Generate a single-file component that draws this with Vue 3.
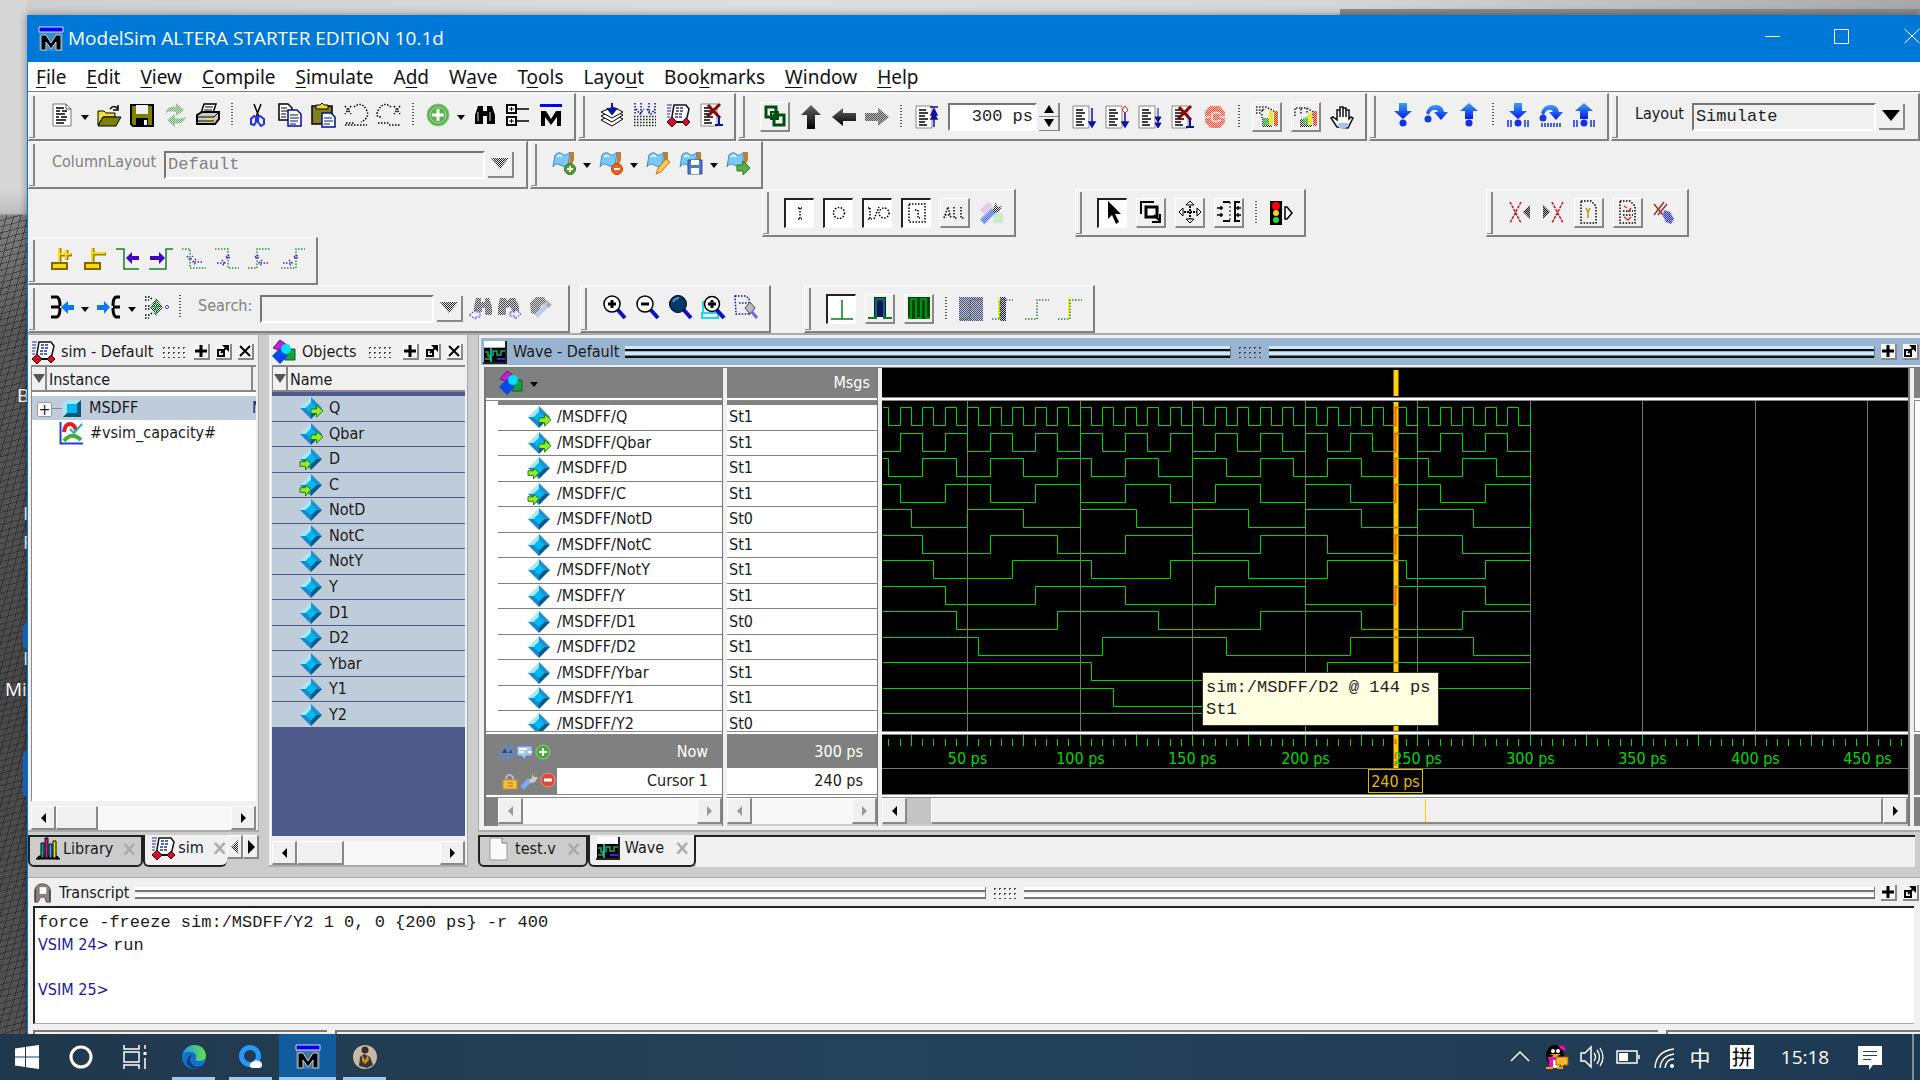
<template>
  <div class="desktop">
    <svg class="defs" width="0" height="0" aria-hidden="true">
      <defs>
        <pattern id="dk" width="2" height="2" patternUnits="userSpaceOnUse"><path d="M0 0h1v1H0zM1 1h1v1H1z" fill="#222" /></pattern>
        <pattern id="db" width="2" height="2" patternUnits="userSpaceOnUse"><path d="M0 0h1v1H0zM1 1h1v1H1z" fill="#2a2ae0" /></pattern>
        <pattern id="dg" width="2" height="2" patternUnits="userSpaceOnUse"><path d="M0 0h1v1H0zM1 1h1v1H1z" fill="#4a9a4a" /></pattern>
        <pattern id="dr" width="2" height="2" patternUnits="userSpaceOnUse"><path d="M0 0h1v1H0zM1 1h1v1H1z" fill="#f03010" /></pattern>
        <linearGradient id="gb" x1="0" y1="0" x2="0" y2="1"><stop offset="0" stop-color="#38a0f8" /><stop offset="1" stop-color="#0818e8" /></linearGradient>
        <linearGradient id="gk" x1="0" y1="0" x2="0" y2="1"><stop offset="0" stop-color="#666" /><stop offset="1" stop-color="#000" /></linearGradient>
        <linearGradient id="ge" x1="0" y1="0" x2="1" y2="0"><stop offset="0" stop-color="#1c9de0" /><stop offset="1" stop-color="#6be04a" /></linearGradient>
      </defs>
    </svg>

    <div class="wallpaper">
      <span class="shortcut s1">B</span>
      <span class="shortcut s2">I</span>
      <span class="shortcut s3">F</span>
      <span class="shortcut s4">I</span>
      <span class="shortcut s5">Mi</span>
      <i class="blob b1"></i>
      <i class="blob b2"></i>
    </div>

    <main class="window">
      <header class="titlebar">
        <svg class="ico" viewBox="0 0 24 24" v-html="icons.logo"></svg>
        <h1>ModelSim ALTERA STARTER EDITION 10.1d</h1>
        <button class="win-btn" aria-label="Minimize"><svg viewBox="0 0 16 16"><path d="M0 8.500h15" /></svg></button>
        <button class="win-btn" aria-label="Maximize"><svg viewBox="0 0 16 16"><path d="M.5 1.500h14v14H.5z" /></svg></button>
        <button class="win-btn last" aria-label="Close"><svg viewBox="0 0 16 16"><path d="M.5 1l15 14M15.500 1l-15 14" /></svg></button>
      </header>

      <nav class="menu">
        <button v-for="m in menus" :key="m[1] + m[2]">{{ m[0] }}<u>{{ m[1] }}</u>{{ m[2] }}</button>
      </nav>

      <section class="toolbars">
        <div v-for="(row, r) in toolbarRows" :key="r" class="tb-row">
          <div v-for="(bar, n) in row" :key="n" class="tb" :class="bar.cls">
            <span class="handle"></span>
            <template v-for="(it, k) in bar.items" :key="k">
              <span v-if="it === '|'" class="tb-sep"></span>
              <span v-else-if="it === 'v'" class="caret"></span>
              <div v-else-if="it === 'runlength'" class="spin">
                <input type="text" value="300 ps" aria-label="Run length" />
                <div class="spin-btns">
                  <button aria-label="Increase"><i class="up"></i></button>
                  <button aria-label="Decrease"><i class="down"></i></button>
                </div>
              </div>
              <div v-else-if="combos[it]" class="combo" :class="it">
                <label :for="it">{{ combos[it].label }}</label>
                <select :id="it" :disabled="combos[it].off"><option>{{ combos[it].value }}</option></select>
                <span class="combo-arrow">
                  <svg viewBox="0 0 20 14"><path d="M1 1h18l-9 11z" :fill="combos[it].off ? 'url(#dk)' : '#000'" /></svg>
                </span>
              </div>
              <button v-else class="tool" :class="looks[it]" :aria-label="it">
                <svg class="ico" viewBox="0 0 24 24" v-html="icons[it]"></svg>
              </button>
            </template>
          </div>
        </div>
      </section>

      <section class="docks">
        <div class="col sim-col">
          <div class="pane">
            <div class="pane-title">
              <svg class="ico" viewBox="0 0 24 24" v-html="icons.sim"></svg>
              <span>sim - Default</span>
              <span class="grip"></span>
              <button v-for="b in paneBtns" :key="b" class="mini" :aria-label="b"><svg viewBox="0 0 14 14" v-html="icons[b]"></svg></button>
            </div>
            <div class="list-head"><span class="sort"><i></i></span><span class="head-text">Instance</span><span class="head-end"></span></div>
            <div class="tree">
              <div class="tree-row selected">
                <span class="expander">+</span><span class="branch"></span>
                <svg class="cube" viewBox="0 0 20 20"><path d="M1 6l4-4h14L5 17H1z" fill="#a8e4f8" /><path d="M19 2v17H1l4-4z" fill="#04587c" /><path d="M5 6h10v9H5z" fill="#00b8f0" /></svg>
                <span class="tree-name">MSDFF</span><span class="tree-unit">M</span>
              </div>
              <div class="tree-row cap">
                <svg class="ico" viewBox="0 0 24 24"><path d="M1.500 1v21.500H24" fill="none" stroke="#2040e0" stroke-width="2" /><path d="M5 11q1-8 6-8 4 0 6 6" fill="none" stroke="#e02020" stroke-width="4" /><path d="M11 8l4 4 8-9" fill="none" stroke="#20b0c0" stroke-width="2" /><path d="M5 20q8-10 17-1" fill="none" stroke="#40b030" stroke-width="4" /></svg>
                <span>#vsim_capacity#</span>
              </div>
            </div>
            <div class="hscroll"><button aria-label="Left"><i class="left"></i></button><span class="thumb t1"></span><span class="trough"></span><button aria-label="Right"><i class="right"></i></button></div>
          </div>
          <div class="tabs">
            <button class="tab off"><svg class="ico" viewBox="0 0 24 24" v-html="icons.library"></svg>Library<b>×</b></button>
            <button class="tab cut"><svg class="ico" viewBox="0 0 24 24" v-html="icons.sim"></svg>sim<b>×</b></button>
            <button class="tab-nav" aria-label="Previous tab"><svg viewBox="0 0 8 14"><path d="M7 0v14L0 7z" fill="url(#dk)" /></svg></button>
            <button class="tab-nav" aria-label="Next tab"><svg viewBox="0 0 8 14"><path d="M1 0v14l7-7z" /></svg></button>
          </div>
        </div>

        <div class="pane objects">
          <div class="pane-title">
            <svg class="ico" viewBox="0 0 24 24" v-html="icons.shapes"></svg>
            <span>Objects</span>
            <span class="grip"></span>
            <button v-for="b in paneBtns" :key="b" class="mini" :aria-label="b"><svg viewBox="0 0 14 14" v-html="icons[b]"></svg></button>
          </div>
          <div class="list-head"><span class="sort"><i></i></span><span class="head-text">Name</span></div>
          <div class="obj-body">
            <ul class="obj-list">
              <li v-for="s in signals" :key="s.name"><svg class="ico" viewBox="0 0 24 24" v-html="icons[s.kind]"></svg>{{ s.name }}</li>
            </ul>
          </div>
          <div class="hscroll"><button aria-label="Left"><i class="left"></i></button><span class="thumb t2"></span><span class="trough"></span><button aria-label="Right"><i class="right"></i></button></div>
        </div>

        <div class="col wave-col">
          <div class="pane wave">
            <div class="pane-title blue">
              <svg class="ico" viewBox="0 0 24 24" v-html="icons.wave"></svg>
              <span>Wave - Default</span>
              <span class="rail"></span><span class="grip"></span><span class="rail"></span>
              <button v-for="b in paneBtns.slice(0, 2)" :key="b" class="mini" :aria-label="b"><svg viewBox="0 0 14 14" v-html="icons[b]"></svg></button>
            </div>
            <div class="wave-grid">
              <div class="wcol names">
                <div class="w-head"><svg class="ico" viewBox="0 0 24 24" v-html="icons.shapes"></svg><span class="caret"></span></div>
                <div class="sash"></div>
                <div class="w-body">
                  <ul><li v-for="s in signals" :key="s.name"><svg class="ico" viewBox="0 0 24 24" v-html="icons[s.kind]"></svg>/MSDFF/{{ s.name }}</li></ul>
                </div>
                <div class="sash"></div>
                <div class="w-now">
                  <svg viewBox="0 0 52 18"><path d="M1 11L6 3l3 6 3-5 3 7zM2 15h12" fill="#444" stroke="#5a8ad0" stroke-width="2" /><path d="M18 3h15v10h-6l-2 4-2-4h-5z" fill="#a8c4f0" stroke="#6080c0" /><path d="M20 6h8M20 9h5M29 9h4" stroke="#fff" stroke-width="2" /><circle cx="44" cy="9" r="7" fill="#50a840" stroke="#8ad080" /><path d="M44 5v8M40 9h8" stroke="#fff" stroke-width="2" /></svg>
                  <span>Now</span>
                </div>
                <div class="w-cursor">
                  <div class="c-icons"><svg viewBox="0 0 54 18"><path d="M4 9V6q3-6 7-1v3" fill="none" stroke="#b8b8b8" stroke-width="2" /><path d="M1 8h14v9H1z" fill="#f0c040" stroke="#c89020" /><path d="M6 11h5M6 14h5" stroke="#b07810" /><path d="M20 16l8-8" stroke="#80a8f0" stroke-width="5" /><path d="M27 8l3-2V2l2 3h4l-3 5-5 1z" fill="#ccc" /><circle cx="46" cy="8" r="7" fill="#e04838" stroke="#f09080" /><path d="M42 8h8" stroke="#fff" stroke-width="3" /></svg></div>
                  <span>Cursor 1</span>
                </div>
                <div class="sash"></div>
                <div class="hscroll faded"><button aria-label="Left"><i class="left"></i></button><span class="trough"></span><button aria-label="Right"><i class="right"></i></button></div>
              </div>
              <div class="wcol values">
                <div class="w-head msgs">Msgs</div>
                <div class="sash"></div>
                <div class="w-body"><ul><li v-for="s in signals" :key="s.name">{{ s.value }}</li></ul></div>
                <div class="sash"></div>
                <div class="w-now"><span>300 ps</span></div>
                <div class="w-cursor"><span>240 ps</span></div>
                <div class="sash"></div>
                <div class="hscroll faded"><button aria-label="Left"><i class="left"></i></button><span class="trough"></span><button aria-label="Right"><i class="right"></i></button></div>
              </div>
              <div class="wcol plot">
                <svg class="w-head"><rect :x="px(240) - 2" y="2" width="5" height="26" fill="#ffd000" /></svg>
                <div class="sash"></div>
                <div class="w-body">
                  <svg class="canvas">
                    <clipPath id="cur"><rect :x="px(240) - 2" y="0" width="5" height="700" /></clipPath>
                    <path v-for="t in gridTimes" :key="t" :d="`M${px(t)} 0V900`" stroke="#747474" stroke-width="1" />
                    <path v-for="(d, i) in traces" :key="i" :d="d" class="trace" />
                    <rect :x="px(240) - 2" y="1" width="5" height="900" fill="#ffd000" />
                    <g clip-path="url(#cur)"><path v-for="(d, i) in traces" :key="i" :d="d" class="trace hot" /></g>
                  </svg>
                </div>
                <div class="sash"></div>
                <svg class="w-now">
                  <path :d="ticks" stroke="#00d800" />
                  <rect :x="px(240) - 2" y="0" width="5" height="33" fill="#ffd000" />
                  <path :d="`M${px(240)} 4v7M${px(240)} 19v14`" stroke="#ff5a00" stroke-width="2" stroke-dasharray="5 2" />
                  <text v-for="t in gridTimes" :key="t" :x="px(t)" y="29">{{ t }} ps</text>
                </svg>
                <svg class="w-cursor">
                  <path d="M0 .5h3000" stroke="#777" />
                  <rect :x="px(240) - 27" y="1.500" width="54" height="23" fill="#000" stroke="#e8b800" stroke-width="1" />
                  <text :x="px(240)" y="19">240 ps</text>
                </svg>
                <div class="sash"></div>
                <div class="hscroll long"><button aria-label="Left"><i class="left"></i></button><span class="before"></span><span class="thumb"><i class="mark"></i></span><button aria-label="Right"><i class="right"></i></button></div>
                <div class="tooltip">sim:/MSDFF/D2 @ 144 ps<br />St1</div>
              </div>
              <div class="wcol edge">
                <div class="w-head"></div><div class="sash"></div><div class="w-body"></div><div class="sash"></div><div class="w-now"></div><div class="w-cursor"></div><div class="sash"></div><div class="end"></div>
              </div>
            </div>
          </div>
          <div class="tabs">
            <button class="tab off"><svg class="ico" viewBox="0 0 24 24"><path d="M4 1h12l5 5v17H4z" fill="#fafafa" stroke="#999" /><path d="M16 1v5h5" fill="#ddd" stroke="#777" /></svg>test.v<b>×</b></button>
            <button class="tab"><svg class="ico" viewBox="0 0 24 24" v-html="icons.wave"></svg>Wave<b>×</b></button>
            <span class="tab-rest"></span>
          </div>
        </div>
      </section>

      <section class="transcript">
        <div class="pane-title">
          <svg class="ico" viewBox="0 0 24 24"><path d="M2 23V8q2-7 9-7 8 0 10 7v15h-5l-2-6H9l-3 6z" fill="#8a8080" stroke="#555" /><path d="M8 5h8v8H8z" fill="#fff" /><path d="M3 8v14M20 8v14" stroke="#333" /></svg>
          <span>Transcript</span>
          <span class="rail"></span><span class="grip"></span><span class="rail"></span>
          <button v-for="b in paneBtns.slice(0, 2)" :key="b" class="mini" :aria-label="b"><svg viewBox="0 0 14 14" v-html="icons[b]"></svg></button>
        </div>
        <div class="console">
          <p>force -freeze sim:/MSDFF/Y2 1 0, 0 {200 ps} -r 400</p>
          <p><em>VSIM 24&gt;&nbsp;</em>run</p>
          <p></p>
          <p><em>VSIM 25&gt;</em></p>
        </div>
        <div class="status"><span class="st1"></span><span class="st2"></span><span class="st3"></span></div>
      </section>
    </main>

    <footer class="taskbar">
      <button v-for="a in apps" :key="a.icon" class="app" :class="a.cls" :aria-label="a.icon"><svg class="ico" viewBox="0 0 24 24" v-html="icons[a.icon]"></svg></button>
      <span class="spacer"></span>
      <button v-for="t in tray" :key="t" class="tray" :aria-label="t"><svg class="ico" viewBox="0 0 24 24" v-html="icons[t]"></svg></button>
      <span class="ime">中</span>
      <span class="ime boxed"><i>拼</i></span>
      <time>15:18</time>
      <button class="notify" aria-label="Notifications"><svg class="ico" viewBox="0 0 24 24"><path d="M0 0h24v19h-9l-4 5v-5H0z" fill="#fff" /><path d="M5 5.500h14M5 9.500h14M5 13.500h8" stroke="#23405a" stroke-width="1" /></svg></button>
      <span class="peek"></span>
    </footer>
  </div>
</template>

<script setup>
const menus = [
  ['', 'F', 'ile'], ['', 'E', 'dit'], ['', 'V', 'iew'], ['', 'C', 'ompile'], ['', 'S', 'imulate'], ['A', 'd', 'd'],
  ['W', 'a', 've'], ['T', 'o', 'ols'], ['Layo', 'u', 't'], ['Boo', 'k', 'marks'], ['', 'W', 'indow'], ['', 'H', 'elp']
]

// '|' is a separator, 'v' a drop-down caret
const toolbarRows = [
  [
    { cls: 'up', items: ['doc', 'v', 'open', 'save', 'refresh', 'print', '|', 'cut', 'copy', 'paste', 'undo', 'redo', '|', 'add', 'v', 'find', 'treeview', 'msim'] },
    { cls: 'up', items: ['compile', 'compileAll', 'sim', 'stopSim'] },
    { cls: '', items: ['link', 'arrowUp', 'arrowLeft', 'arrowRight', '|', 'restart', 'runlength', 'run', 'runCont', 'runAll', 'brk', 'stop', '|', 'prof1', 'prof2', 'hand'] },
    { cls: 'up', items: ['stepIn', 'stepOver', 'stepOut', '|', 'stepIn2', 'stepOver2', 'stepOut2'] },
    { cls: 'up grow', items: ['layout'] }
  ],
  [
    { cls: 'up col-layout', items: ['column'] },
    { cls: 'up', items: ['flagAdd', 'v', 'flagDel', 'v', 'flagEdit', 'flagSave', 'v', 'flagGo'] }
  ],
  [
    { cls: 'filter', items: ['fI', 'fO', 'fIO', 'fT', 'fAll', 'fWrench'] },
    { cls: 'mode', items: ['pointer', 'zoomMode', 'pan', 'edit', '|', 'traffic'] },
    { cls: 'cover', items: ['xLeft', 'xRight', 'page1', 'page2', 'xErase'] }
  ],
  [
    { cls: 'up', items: ['curAdd', 'curDel', 'edgeL', 'edgeR', 'fall1', 'fall2', 'rise1', 'rise2'] }
  ],
  [
    { cls: 'up search-bar', items: ['mergeL', 'v', 'mergeR', 'v', 'net', '|', 'search', 'findPrev', 'findNext', 'wrench'] },
    { cls: 'up zoom', items: ['zoomIn', 'zoomOut', 'zoomFull', 'zoomCur', 'zoomSel'] },
    { cls: 'show', items: ['w1', 'w2', 'w3', '|', 'w4', 'w5', 'w6', 'w7'] }
  ]
]

const combos = {
  layout: { label: 'Layout', value: 'Simulate', off: false },
  column: { label: 'ColumnLayout', value: 'Default', off: true },
  search: { label: 'Search:', value: '', off: true }
}

const looks = {
  link: 'raised', prof1: 'raised', prof2: 'raised', fI: 'sunken', fO: 'sunken', fIO: 'sunken', fT: 'sunken', fAll: 'raised',
  pointer: 'sunken', zoomMode: 'raised', pan: 'raised', edit: 'raised', page1: 'raised', page2: 'raised',
  w1: 'sunken', w2: 'raised', w3: 'raised', findPrev: 'tight', findNext: 'tight'
}

const paneBtns = ['plus', 'undock', 'close']

// each signal is high for the first half of its period
const signals = [
  { name: 'Q', kind: 'sigOut', value: 'St1', period: 10 },
  { name: 'Qbar', kind: 'sigOut', value: 'St1', period: 20 },
  { name: 'D', kind: 'sigIn', value: 'St1', period: 30 },
  { name: 'C', kind: 'sigIn', value: 'St1', period: 40 },
  { name: 'NotD', kind: 'sig', value: 'St0', period: 50 },
  { name: 'NotC', kind: 'sig', value: 'St1', period: 60 },
  { name: 'NotY', kind: 'sig', value: 'St1', period: 70 },
  { name: 'Y', kind: 'sig', value: 'St1', period: 80 },
  { name: 'D1', kind: 'sig', value: 'St0', period: 90 },
  { name: 'D2', kind: 'sig', value: 'St1', period: 110 },
  { name: 'Ybar', kind: 'sig', value: 'St1', period: 210 },
  { name: 'Y1', kind: 'sig', value: 'St1', period: 230 },
  { name: 'Y2', kind: 'sig', value: 'St0', period: 400 }
]

const start = 13
const end = 300
const px = t => Math.round(t * 2.25 - 27.5) + 0.5

const traces = signals.map((s, i) => {
  const hi = Math.round(6 + i * 25.5) + 0.5
  const lo = hi + 18
  const half = s.period / 2
  const level = t => (Math.floor(t / half) % 2 === 0 ? hi : lo)
  let d = `M1 ${level(start)}`
  for (let t = half; t <= end; t += half) {
    if (t > start) d += `H${px(t)}V${level(t)}`
  }
  return d + `H${px(end)}`
})

const gridTimes = [50, 100, 150, 200, 250, 300, 350, 400, 450]

let ticks = ''
for (let t = 15; t < 1200; t += 5) {
  ticks += t % 25 === 0 ? `M${px(t)} 0v11` : `M${px(t)} 4v7`
}

const apps = [
  { icon: 'windows', cls: '' }, { icon: 'cortana', cls: '' }, { icon: 'taskview', cls: '' },
  { icon: 'edge', cls: 'open first' }, { icon: 'qbrowser', cls: 'open' }, { icon: 'logo', cls: 'open active' }, { icon: 'photo', cls: 'open' }
]
const tray = ['chevron', 'penguin', 'speaker', 'battery', 'wifi']

const page = '<path d="M2 1h16v22H2z" fill="#fff" stroke="#888"/><path d="M5 5h7M5 8h9M5 11h6M5 14h9M5 17h6M5 20h8" stroke="#000" stroke-width="1.500"/>'
const flag = '<path d="M18 1h4v8l-2 4-3 4z" fill="#c08030"/><path d="M3 4q4-4 7-1t8-2l-2 13q-4 3-8 0t-7 2z" fill="#7cc8f4" stroke="#3a8cd0"/><path d="M5 6q3-3 5 0" stroke="#d8f0ff" stroke-width="2" fill="none"/>'
const glass = '<path d="M15 14l8 9" stroke="#1010c0" stroke-width="4"/>'
const dot = 'fill="none" stroke-dasharray="1.500 1.500" stroke-width="1.500"'
const gem = '<path d="M12 0L0 12h12z" fill="#a8e8f8"/><path d="M12 0l12 12H12z" fill="#2090d0"/><path d="M0 12l12 12V12z" fill="#1888cc"/><path d="M24 12L12 24V12z" fill="#045a88"/><path d="M12 6l6 6-6 6-6-6z" fill="#00b8f4"/>'
const simIcon = '<path d="M1 2h5M1 5h4M1 8h4M1 11h3M1 14h3" stroke="#6868c0" stroke-width="1.500"/><path d="M8 2h12l3 4-3 13H5z" fill="#fff" stroke="#111" stroke-width="1.500"/><path d="M10 5h8M10 8h7M9 11h8M9 14h7" stroke="#223a90" stroke-width="1.500" stroke-dasharray="3 1"/><path d="M6 14l5 5-5 5-5-5zM20 15l4 4-4 4-4-4z" fill="#d01028" stroke="#400" stroke-width="1"/><path d="M11 19h5" stroke="#111" stroke-width="2"/>'
const downArrow = '<path d="M8 0h8v8h5l-9 8-9-8h5z" fill="url(#gb)"/>'
const upArrow = '<path d="M12 0l9 8h-5v8H8V8H3z" fill="url(#gb)"/>'
const overArrow = '<path d="M2 10q3-9 11-8 6 1 7 7h4l-7 8-7-8h4q-1-3-5-2-3 1-4 5z" fill="url(#gb)"/>'
const bars = '<path d="M2 17v7M5 17v7M19 17v7M22 17v7" stroke="#1030e8" stroke-width="1.500"/><circle cx="12" cy="20" r="3.500" fill="#1030e8"/>'
const bino = c => `<path d="M5 3h5v5h4V3h5l3 9v9h-8v-8h-4v8H2v-9z" fill="${c}"/><path d="M5 9v9M17 9v9" stroke="#ddd"/>`

const icons = {
  logo: '<path d="M0 0h24v24H0z" fill="#ccc" opacity=".25"/><path d="M0 0h24v5H0z" fill="#00f" stroke="#ddd"/><path d="M2 23V8h5l5 8 5-8h5v15h-5v-8l-5 7-5-7v8z" fill="#000" stroke="#ccc"/>',
  msim: '<path d="M1 1h22v3H1z" fill="#00f"/><path d="M2 23V8h5l5 8 5-8h5v15h-4v-9l-6 8-6-8v9z" fill="#000"/>',
  doc: '<path d="M3 1h13l5 5v17H3z" fill="#fff" stroke="#777"/><path d="M16 1v5h5" fill="none" stroke="#555"/><path d="M6 5h8M6 8h4M12 8h5M6 11h9M6 14h3M11 14h6M6 17h10M6 20h8" stroke="#000" stroke-width="1.500"/>',
  open: '<path d="M13 6q4-5 8 0M21 2v5h-5" fill="none" stroke="#000" stroke-width="1.500"/><path d="M1 8h6l2 2h9v4H6l-5 8z" fill="#f0e030" stroke="#000"/><path d="M6 14h18l-5 9H1z" fill="#808000" stroke="#000"/>',
  save: '<path d="M1 2h22v21H3l-2-2z" fill="#808000" stroke="#000" stroke-width="2"/><path d="M6 2h12v9H6z" fill="#f0f0f0"/><path d="M6 15h12v8H6z" fill="#000"/><path d="M14 17h3v5h-3z" fill="#fff"/>',
  refresh: '<g opacity=".75"><path d="M2 10q4-8 11-6V0l8 7-8 6V9Q8 7 2 10z" fill="#b8dcb8"/><path d="M23 14q-3 8-11 6v4l-8-7 8-6v4q5 2 11-1z" fill="#b8dcb8"/><path d="M2 10q4-8 11-6V0l8 7-8 6V9Q8 7 2 10z" fill="url(#dg)"/><path d="M23 14q-3 8-11 6v4l-8-7 8-6v4q5 2 11-1z" fill="url(#dg)"/></g>',
  print: '<path d="M8 1h12l-3 9H5z" fill="#fff" stroke="#000" stroke-width="1.500"/><path d="M9 4h8M8 7h8" stroke="#000"/><path d="M1 12l5-3h17v7l-4 5H1z" fill="#c8c8c8" stroke="#000" stroke-width="2"/><path d="M2 14h16l4-4M2 18h16" stroke="#000" fill="none"/><path d="M11 15h5v2h-5z" fill="#f0f000"/>',
  cut: '<path d="M9 1l5 13M16 1l-5 13" stroke="#000" stroke-width="1.500"/><path d="M9 13l-3 3v5l3 1 2-3v-5zM15 13l4 3v5l-3 2-3-4v-5z" fill="none" stroke="#2030f0" stroke-width="2"/>',
  copy: '<path d="M1 1h9l4 4v12H1z" fill="#fff" stroke="#000" stroke-width="1.500"/><path d="M3 5h6M3 8h8M3 11h5M3 14h5" stroke="#000"/><path d="M10 7h9l4 4v12H10z" fill="#fff" stroke="#001090" stroke-width="1.500"/><path d="M12 12h8M12 15h9M12 18h8M12 21h6" stroke="#001090"/>',
  paste: '<path d="M1 3h20v18H1z" fill="#808020" stroke="#000" stroke-width="1.500"/><path d="M5 2h4l2-2 2 2h4v4H5z" fill="#e8e020" stroke="#000"/><path d="M11 10h9l4 4v10H11z" fill="#fff" stroke="#001090" stroke-width="1.500"/><path d="M13 15h8M13 18h9M13 21h6" stroke="#001090"/>',
  undo: `<path d="M1 3l6 8M7 3l-6 8M10 4q7-6 12 2t-5 13" stroke="#000" ${dot}/><path d="M1 22h22M2 20h8" stroke="#000" ${dot}/>`,
  redo: `<path d="M23 3l-6 8M17 3l6 8M14 4Q7-2 2 6t2 8" stroke="#000" ${dot}/><path d="M1 20h12M12 22h11" stroke="#000" ${dot}/>`,
  add: '<circle cx="12" cy="12" r="11" fill="#5cb050" stroke="#8ac880"/><circle cx="12" cy="12" r="8" fill="none" stroke="#a8dca0"/><path d="M12 6v12M6 12h12" stroke="#fff" stroke-width="3"/>',
  find: bino('#000'),
  treeview: '<path d="M1 2h9v8H1zM1 14h9v8H1z" fill="#fff" stroke="#000" stroke-width="2"/><path d="M3 6h5M5.500 4v4M3 18h5M5.500 16v4" stroke="#000"/><path d="M10 6h13M10 18h13" stroke="#000" stroke-width="1.500"/>',
  compile: '<path d="M1 17l12-6 10 5-11 7z" fill="#fff" stroke="#000"/><path d="M1 13l12-6 10 5-11 7z" fill="#fff" stroke="#000"/><path d="M1 9l12-5 10 5-11 6z" fill="#fff" stroke="#000"/><path d="M12 0v9M8 6l4 5 4-5z" stroke="#0818a0" stroke-width="2" fill="#0818a0"/>',
  compileAll: `<path d="M2 0v12M8 0v12M16 0v12M22 0v12M3 6l4 5 4-5M14 6l4 5 4-5" stroke="#1010a0" ${dot}/><path d="M1 13.500h22M1 16.500h22M1 19.500h22M1 22.500h22" stroke="#222" ${dot}/>`,
  sim: simIcon,
  stopSim: page + '<path d="M9 2l12 13M21 1L8 14" stroke="#8a0808" stroke-width="3"/><path d="M20 13v8M16 22h8" stroke="#1010a0" stroke-width="2"/>',
  link: '<path d="M3 3h10v10H3z" fill="none" stroke="#005010" stroke-width="3"/><path d="M11 11h10v10H11z" fill="none" stroke="#005010" stroke-width="3"/><path d="M8 8h7v7H8z" fill="none" stroke="#005010" stroke-width="2"/>',
  arrowUp: '<path d="M12 0l10 10h-6v14H8V10H2z" fill="url(#gk)"/>',
  arrowLeft: '<path d="M0 12L11 3v5h13v8H11v5z" fill="url(#gk)"/>',
  arrowRight: '<path d="M24 12L13 3v5H0v8h13v5z" fill="#bbb"/><path d="M24 12L13 3v5H0v8h13v5z" fill="url(#dk)" opacity=".7"/>',
  restart: page + '<path d="M20 4v18M16 2h8M17 10l3-6 3 6zM17 14l3-5 3 5z" stroke="#1010a0" fill="#1010a0" stroke-width="1.500"/>',
  run: page + '<path d="M21 3v16M18 17h6l-3 5z" stroke="#1010a0" fill="#1010a0" stroke-width="1.500"/>',
  runCont: page + '<path d="M21 8v11M18 17h6l-3 5z" stroke="#1010a0" fill="#1010a0" stroke-width="1.500"/><path d="M21 1l3 4-3 3-3-3z" fill="#fff" stroke="#f02020"/>',
  runAll: page + '<path d="M21 3v16M18 12h6l-3 5zM18 18h6l-3 5z" stroke="#1010a0" fill="#1010a0"/>',
  brk: page + '<path d="M9 2l12 13M21 1L8 14" stroke="#8a0808" stroke-width="3"/><path d="M20 13v8M16 22h8" stroke="#1010a0" stroke-width="2"/>',
  stop: '<path d="M7 1h10l5 6v10l-5 6H7l-5-6V7z" fill="#f8c8c0"/><path d="M7 1h10l5 6v10l-5 6H7l-5-6V7z" fill="url(#dr)" opacity=".8"/><path d="M18 9q-6-3-9 0v6q3 3 9 0M2 12h5M17 12h5" fill="none" stroke="#f8e8e4" stroke-width="1.500"/>',
  prof1: `<path d="M7 14h10v9H7z" fill="url(#dk)"/><path d="M8 13l6 2v6H8z" fill="#60d060" opacity=".7"/><path d="M14 7h4v14h-4z" fill="#f0e830"/><path d="M19 7h4v15h-4z" fill="#f8b0a0"/><path d="M19 7h4v15h-4z" fill="url(#dr)"/><path d="M1 3h10l8 4M1 6h8M1 9h4l4-4M7 10v4" stroke="#222" ${dot}/>`,
  prof2: `<path d="M6 15h12v8H6z" fill="url(#dk)"/><path d="M1 12V4h6v6M7 4h6v6M13 4l6 4v6" stroke="#222" ${dot}/><path d="M9 14l5-2v8H9z" fill="#60d060" opacity=".7"/><path d="M14 9h4v12h-4z" fill="#f0e830"/><path d="M19 7h4v15h-4z" fill="#f8b0a0"/><path d="M19 7h4v15h-4z" fill="url(#dr)"/>`,
  hand: '<path d="M7 22l-6-9 2-1 4 3V5h3V2h3v1h3v2h3v9l2-2 2 1-5 10z" fill="#fff" stroke="#111" stroke-width="1.500"/><path d="M10 5v7M13 3v9M16 5v7" stroke="#111" stroke-width="1.500"/><path d="M8 18h11l-3 5H9z" fill="#a0c0f0"/>',
  stepIn: downArrow + '<circle cx="12" cy="20" r="3.500" fill="#1030e8"/>',
  stepOver: overArrow + '<circle cx="4" cy="16" r="3.500" fill="#1040d0"/>',
  stepOut: upArrow + '<circle cx="12" cy="20" r="3.500" fill="#1030e8"/>',
  stepIn2: downArrow + bars,
  stepOver2: overArrow + '<path d="M3 20v4M6 20v4M9 20v4M12 20v4M15 20v4M18 20v4M21 20v4" stroke="#1030e8" stroke-width="1.500"/><circle cx="4" cy="15" r="3.500" fill="#1040d0"/>',
  stepOut2: upArrow + bars,
  flagAdd: flag + '<circle cx="18" cy="18" r="5.500" fill="#50a030" stroke="#387820"/><path d="M18 15v6M15 18h6" stroke="#fff" stroke-width="2"/>',
  flagDel: flag + '<circle cx="18" cy="18" r="5.500" fill="#f06018" stroke="#c04000"/><path d="M15 18h6" stroke="#fff" stroke-width="2"/>',
  flagEdit: flag + '<path d="M10 23l2-6 8-9 4 3-9 10z" fill="#f8c850" stroke="#b08020"/>',
  flagSave: flag + '<path d="M9 9h14v14H9z" fill="#5078c8" stroke="#304c98"/><path d="M12 9h8v5h-8zM12 17h8v6h-8z" fill="#fff"/>',
  flagGo: flag + '<path d="M11 14h6v-4l7 7-7 7v-4h-6z" fill="#58b040" stroke="#307820"/>',
  fI: `<path d="M10 7h4M12 7v11M10 18h4" stroke="#000" ${dot}/>`,
  fO: `<circle cx="12" cy="12" r="5.500" stroke="#000" ${dot}/>`,
  fIO: `<path d="M2 7h3M4 7v11M2 18h4M8 18l5-12" stroke="#000" ${dot}/><circle cx="18" cy="12" r="5" stroke="#000" ${dot}/>`,
  fT: `<path d="M4 3h16v18H4zM10 9h3v8h2" stroke="#000" ${dot}/>`,
  fAll: `<path d="M1 18l4-11 3 11M2 15h6M11 7v11h4M18 7v11h4" stroke="#000" ${dot}/>`,
  fWrench: '<path d="M1 9L9 1l5 3-9 9z" fill="#e8c8e8"/><path d="M14 12h10v10H14z" fill="#d0e8d0"/><path d="M3 21L15 9" stroke="#a8c0f8" stroke-width="7"/><path d="M2 19L13 8l4 3L5 23z" fill="url(#db)" opacity=".6"/><path d="M14 8l3-7 1 5 5-1-3 6-5 1z" fill="url(#dk)"/>',
  pointer: '<path d="M7 0v18l4-4 4 9 3-2-4-8h6z" fill="#000"/>',
  zoomMode: '<path d="M2 14V2h13" fill="none" stroke="#000" stroke-width="2"/><path d="M7 7h11v10H7z" fill="#fff" stroke="#000" stroke-width="3"/><path d="M15 15l6 6M21 14v8h-8" fill="none" stroke="#000" stroke-width="2"/>',
  pan: '<path d="M12 3v18M3 12h18" stroke="#000" stroke-width="2" stroke-dasharray="2 1"/><path d="M8 5l4-4 4 4zM8 19l4 4 4-4zM5 8l-4 4 4 4zM19 8l4 4-4 4z" fill="#fff" stroke="#000"/>',
  edit: '<path d="M6 2h7M6 21h7M23 2h-5v19h5" fill="none" stroke="#000" stroke-width="2"/><path d="M13 2v20" stroke="#000" stroke-dasharray="2 2"/><path d="M0 8h6M0 15h6M19 8h5M19 15h5M4 6v4M4 13v4M21 6v4M21 13v4" stroke="#000" stroke-width="1.500"/>',
  traffic: '<path d="M1 0h12v24H1z"/><circle cx="7" cy="5" r="4" fill="#f00"/><circle cx="7" cy="12" r="3" fill="#f0d020"/><circle cx="7" cy="19" r="3" fill="#20e040"/><path d="M16 6h2l5 6-5 6h-2z" fill="#fff" stroke="#000" stroke-width="1.500"/>',
  xLeft: '<path d="M2 1l11 21M13 1L2 22" stroke="#b02828" stroke-width="1.500" stroke-dasharray="3 1"/><path d="M22 4v14l-7-7z" fill="#aaa"/><path d="M22 4v14l-7-7z" fill="url(#dk)"/>',
  xRight: '<path d="M11 1l11 21M22 1L11 22" stroke="#b02828" stroke-width="1.500" stroke-dasharray="3 1"/><path d="M2 4v14l7-7z" fill="#aaa"/><path d="M2 4v14l7-7z" fill="url(#dk)"/>',
  page1: `<path d="M4 1h10l5 5v17H4z" stroke="#000" ${dot}/><path d="M9 8l2 4 2-4M11 12v6" fill="none" stroke="#a0a020" stroke-width="1.500"/>`,
  page2: `<path d="M4 1h10l5 5v17H4zM7 11h10M7 15h10" stroke="#000" ${dot}/><path d="M8 6l3 2M15 8l-3 4M8 17l4 3 3-3" fill="none" stroke="#e03030" stroke-width="1.500"/>`,
  xErase: '<path d="M2 3l10 12M12 1L2 14M15 3L6 14" stroke="#a03030" stroke-width="1.500"/><path d="M12 9l6 2 4 7-3 5-5-2-3-6z" fill="#b0b0f0"/><path d="M12 9l6 2 4 7-3 5-5-2-3-6z" fill="url(#db)"/>',
  curAdd: '<path d="M10 1v15M10 8h12M17 3v10" stroke="#a08000" stroke-width="3"/><path d="M9 1v15M9 7h12M16 3v9" stroke="#f8d810" stroke-width="2"/><path d="M2 16h15v6H2z" fill="#f8d810" stroke="#806800" stroke-width="2"/>',
  curDel: '<path d="M10 1v15M10 7h13" stroke="#a08000" stroke-width="3"/><path d="M9 1v15M9 6h13" stroke="#f8d810" stroke-width="2"/><path d="M2 16h15v6H2z" fill="#f8d810" stroke="#806800" stroke-width="2"/>',
  edgeL: '<path d="M0 2h8v20h15" fill="none" stroke="#108030" stroke-width="1.500"/><path d="M10 11l6-6v4h7v4h-7v4z" fill="#4000c8"/>',
  edgeR: '<path d="M0 22h17V2h7" fill="none" stroke="#108030" stroke-width="1.500"/><path d="M16 11l-6-6v4H1v4h9v4z" fill="#4000c8"/>',
  fall1: `<path d="M0 2h8v19h16" stroke="#209040" ${dot}/><path d="M5 9l3 4 3-4M20 15h-8M14 12l-3 3 3 3" stroke="#5020c0" ${dot}/>`,
  fall2: `<path d="M0 2h13v19h11" stroke="#209040" ${dot}/><path d="M11 10l2-2 2 2-2 2zM2 16h9M7 13l3 3-3 3" stroke="#5020c0" ${dot}/>`,
  rise1: `<path d="M0 21h9V2h13" stroke="#209040" ${dot}/><path d="M7 10l2-2 2 2-2 2zM20 16h-8M14 13l-3 3 3 3" stroke="#5020c0" ${dot}/>`,
  rise2: `<path d="M0 21h15V2h9" stroke="#209040" ${dot}/><path d="M13 10l2-2 2 2-2 2zM2 16h9M8 13l3 3-3 3" stroke="#5020c0" ${dot}/>`,
  mergeL: '<path d="M1 2h6q3 1 3 9M1 12h9M1 22h6q3-1 3-9" fill="none" stroke="#000" stroke-width="3"/><path d="M11 12l7-6v4h6v5h-6v4z" fill="#0878f8"/>',
  mergeR: '<path d="M23 2h-4q-3 1-3 9M23 12h-7M23 22h-4q-3-1-3-9" fill="none" stroke="#000" stroke-width="3"/><path d="M13 12L7 6v4H0v5h7v4z" fill="#0878f8"/>',
  net: `<path d="M1 2h4l3 2M1 5h4M1 11h5M1 14h5M1 20h4l3-2M1 23h4" stroke="#000" ${dot}/><path d="M12 3l7 9-7 9-6-9z" fill="url(#dk)"/><path d="M12 5v14M7 12h10" stroke="#20c040" stroke-width="2" stroke-dasharray="2 1"/><path d="M21 12l2-2 2 2-2 2z" fill="none" stroke="#5030f0"/>`,
  findPrev: '<g opacity=".8"><path d="M7 3h5v4h4V3h4l3 9v8h-7v-7h-3v4l-8-1v-4z" fill="#ccc"/><path d="M7 3h5v4h4V3h4l3 9v8h-7v-7h-3v4l-8-1v-4z" fill="url(#dk)"/></g><path d="M7 15l-7 5 7 4v-2h4v-5H7z" fill="#eef" stroke="#4040f0" stroke-dasharray="2 1"/>',
  findNext: '<g opacity=".8"><path d="M3 3h6l1 3 3-3h5l4 8v6h-6l-3-5-4 1v7H1v-8z" fill="#ccc"/><path d="M3 3h6l1 3 3-3h5l4 8v6h-6l-3-5-4 1v7H1v-8z" fill="url(#dk)"/></g><path d="M13 17h5v-3l6 5-6 5v-3h-5z" fill="#eef" stroke="#4040f0" stroke-dasharray="2 1"/>',
  wrench: '<g opacity=".7"><path d="M2 8l6-6h8l3 5-6 4-4 9-6-2z" fill="#ccc"/><path d="M2 8l6-6h8l3 5-6 4-4 9-6-2z" fill="url(#dk)"/></g><path d="M8 21l11-11" stroke="#b8d0f0" stroke-width="5"/><path d="M18 10l2-5 1 3 3 1-3 4z" fill="#aaa"/>',
  zoomIn: glass + '<circle cx="10" cy="9" r="8" fill="#fff" stroke="#000" stroke-width="1.500"/><path d="M10 5v8M6 9h8" stroke="#000" stroke-width="3"/>',
  zoomOut: glass + '<circle cx="10" cy="9" r="8" fill="#fff" stroke="#000" stroke-width="1.500"/><path d="M6 9h8" stroke="#000" stroke-width="3"/>',
  zoomFull: glass + '<circle cx="10" cy="9" r="8.500" fill="#003868" stroke="#000"/><path d="M5 7q2-4 6-4" stroke="#4898c8" stroke-width="2" fill="none"/>',
  zoomCur: '<path d="M1 18h16v5H1zM2 6v12" fill="none" stroke="#20d8e8" stroke-width="2"/>' + glass + '<circle cx="11" cy="9" r="7.500" fill="#fff" stroke="#000" stroke-width="1.500"/><path d="M11 5v8M7 9h8" stroke="#000" stroke-width="3"/>',
  zoomSel: `<path d="M1 1h11l3 3v15H2zM5 8h8" stroke="#1010a0" ${dot}/><path d="M16 7l5 6-5 6-5-6z" fill="#bbb" stroke="#444"/><path d="M18 17l5 6" stroke="#6868f0" stroke-width="3"/>`,
  w1: '<path d="M1 22h22M12 3v19" stroke="#008020" stroke-width="1.500"/>',
  w2: '<path d="M6 1h12v20H6z" fill="#10107c"/><path d="M0 22h8V3h8v19h8" fill="none" stroke="#008020" stroke-width="2"/>',
  w3: '<path d="M1 1h22v22H1z" fill="#004800"/><path d="M1 22h3V3h5v19h5V3h5v19h4" fill="none" stroke="#009020" stroke-width="2"/>',
  w4: `<path d="M0 0h24v24H0z" fill="#c0c0f0"/><path d="M0 0h24v24H0z" fill="url(#dk)" opacity=".7"/><path d="M1 22h10V3h12" stroke="#209040" ${dot}/>`,
  w5: `<path d="M8 0h6v24H8z" fill="#c0c0f0"/><path d="M8 0h6v24H8z" fill="url(#dk)"/><path d="M7 1v21" stroke="#f0f020" stroke-width="2"/><path d="M0 22h8V3h13" stroke="#209040" ${dot}/>`,
  w6: `<path d="M0 22h12V3h12" stroke="#209040" ${dot}/>`,
  w7: `<path d="M11 1v20" stroke="#f0f020" stroke-width="2"/><path d="M0 22h12V3h12" stroke="#209040" ${dot}/>`,
  plus: '<path d="M7 1v12M1 7h12" stroke="#000" stroke-width="3"/>',
  undock: '<path d="M2 6h6v6H2z" fill="none" stroke="#000" stroke-width="2"/><path d="M5 9l6-6" stroke="#000" stroke-width="2"/><path d="M6 1h7v7z" fill="#000"/>',
  close: '<path d="M2 2l10 10M12 2L2 12" stroke="#000" stroke-width="2"/>',
  shapes: '<path d="M1 8l7-8 7 5-6 6z" fill="#c020d8" stroke="#701080"/><path d="M13 9h10v11H13z" fill="#18a040" stroke="#0a6020"/><path d="M8 8l8 8-8 8-8-8z" fill="#0848e8"/><circle cx="14" cy="9" r="5" fill="#00e0f8"/>',
  library: '<path d="M0 22h24l-3-3H3zM3 20v3M21 20v3" fill="#000" stroke="#000"/><path d="M5 6h3v15H5z" fill="#10a890" stroke="#000"/><path d="M9 1h3v20H9z" fill="#e01090" stroke="#000"/><path d="M13 7h3v14h-3z" fill="#38a0f0" stroke="#000"/><path d="M17 4h3v17h-3z" fill="#e8e010" stroke="#000"/>',
  wave: '<path d="M1 1h22v6H1z" fill="#fff"/><path d="M1 8h21v14H1z" fill="#000"/><path d="M23 1v22H0" fill="none" stroke="#222" stroke-width="2"/><path d="M2 12h3v4h3M10 16V11h4v4h4v-4h4M2 19h5v-3" fill="none" stroke="#10b060" stroke-width="1.500"/><path d="M8 8v14" stroke="#20d8e0" stroke-width="1.500"/><path d="M14 19h8" stroke="#4020f0" stroke-width="2"/>',
  sig: gem,
  sigOut: gem + '<path d="M12 13h6V9l7 6-7 7v-4h-6z" fill="#90f020" stroke="#207010"/>',
  sigIn: gem + '<path d="M0 15h6v-3l6 5-6 7v-4H0z" fill="#90f020" stroke="#207010"/>',
  windows: '<path d="M0 3.500l10-1.500v9.500H0zM11 1.800L24 0v11.500H11zM0 12.500h10V22L0 20.500zM11 12.500h13V24l-13-1.800z" fill="#fff"/>',
  cortana: '<circle cx="12" cy="12" r="10" fill="none" stroke="#fff" stroke-width="3"/>',
  taskview: '<path d="M1 0v4h15V0M1 24v-4h15v4M1 7h15v10H1zM22 0v4M22 13v11" fill="none" stroke="#fff" stroke-width="1.500"/><path d="M20.500 7h3v3h-3z" fill="#fff"/>',
  edge: '<circle cx="12" cy="12" r="12" fill="#1470c8"/><path d="M1 9Q4 0 13 0t11 10q0 6-7 6-4 0-3-3 1-5-4-6T1 9z" fill="url(#ge)"/><path d="M10 10q-5 6 2 11 5 2 9-1-4 5-11 3-8-4-4-10 1-3 4-3z" fill="#0a3c80"/>',
  qbrowser: '<circle cx="11" cy="11" r="8.500" fill="none" stroke="#2898f8" stroke-width="5"/><path d="M11 22q-1-4 3-5 2-3 5-1 4 0 4 4 0 3-3 3h-7z" fill="#fff"/>',
  photo: '<circle cx="12" cy="12" r="12" fill="#c8b8a4"/><circle cx="12" cy="5" r="3.500" fill="#3a2c24"/><path d="M6 21l1-9 4-3 6 3 3 8-6 3z" fill="#3a3634"/><path d="M9 10l3 5 3-5 1 5-4 4-3-3z" fill="#c88c28"/>',
  chevron: '<path d="M3 16l9-9 9 9" fill="none" stroke="#fff" stroke-width="1.500"/>',
  penguin: '<ellipse cx="11" cy="11" rx="9" ry="11" fill="#000"/><ellipse cx="11" cy="17" rx="6" ry="6" fill="#fff"/><circle cx="9" cy="6" r="2" fill="#fff"/><circle cx="14" cy="6" r="2" fill="#fff"/><path d="M6 9h11l-5 3z" fill="#f8a000"/><path d="M3 12h15v3h-9v7H5v-7z" fill="#f808b8"/><path d="M14 0l6 1 2 5-5-2z" fill="#f808b8"/><path d="M12 12h12v8h-4l-3 3v-3h-5z" fill="#f8b828" stroke="#a06000"/><path d="M2 22h7v2H2zM13 22h6v2h-6z" fill="#f8a000"/>',
  speaker: '<path d="M1 8h4l6-6v20l-6-6H1z" fill="none" stroke="#fff" stroke-width="1.500"/><path d="M14 8q3 4 0 8M17 5q5 7 0 14M20 3q6 9 0 18" fill="none" stroke="#fff" stroke-width="1.300"/>',
  battery: '<path d="M1 6h20v12H1zM23 10v4" fill="none" stroke="#fff" stroke-width="1.500"/><path d="M3 8h9v8H3z" fill="#fff"/>',
  wifi: '<path d="M3 23Q4 6 22 4M8 23Q9 11 22 9M13 23q1-9 9-9" fill="none" stroke="#fff" stroke-width="1.300"/><circle cx="20" cy="21" r="2" fill="#fff"/>'
}
</script>

<style>
html, body {
  margin: 0;
}
</style>

<style scoped>
* {
  box-sizing: border-box;
}
button {
  margin: 0;
  padding: 0;
  border: 0;
  background: none;
  font: inherit;
  color: inherit;
  flex: none;
}
.desktop {
  position: relative;
  display: flex;
  flex-direction: column;
  height: 100vh;
  overflow: hidden;
  background: #d8d8d8;
  color: #1a1a1a;
  font: 16px/20px "DejaVu Sans Condensed", "DejaVu Sans", "Liberation Sans", sans-serif;
}
.defs {
  position: absolute;
}
.ico {
  width: 24px;
  height: 24px;
  flex: none;
  overflow: visible;
}

/* wallpaper behind the window */
.wallpaper {
  position: absolute;
  inset: 0;
  background:
    linear-gradient(90deg, transparent 1340px, #8c8c8c 1340px) 0 9px / 100% 6px no-repeat,
    repeating-linear-gradient(165deg, transparent 0 5px, #2228 5px 6px) 0 215px / 27px 100% no-repeat,
    repeating-linear-gradient(105deg, transparent 0 6px, #2228 6px 7px) 0 215px / 27px 100% no-repeat,
    linear-gradient(#d6d6d6 0 190px, #bdbdbd 213px, #808080 216px, #5a5a5a 330px, #484848 700px, #555 100%) 0 0 / 27px 100% no-repeat,
    linear-gradient(90deg, #cecece, #dedede 40%, #d6d6d6 70%, #a8a8a8);
}
.shortcut {
  position: absolute;
  color: #fff;
  font: 19px/24px "Open Sans", sans-serif;
}
.s1 { left: 17px; top: 383px; }
.s2 { left: 23px; top: 501px; }
.s3 { left: 23px; top: 530px; }
.s4 { left: 23px; top: 646px; }
.s5 { left: 5px; top: 677px; }
.blob {
  position: absolute;
  left: 23px;
  width: 12px;
  border-radius: 8px;
  background: #1470d0;
}
.b1 { top: 622px; height: 28px; }
.b2 { top: 750px; height: 48px; }

.window {
  position: relative;
  flex: 1;
  min-height: 0;
  display: flex;
  flex-direction: column;
  margin: 15px 0 0 27px;
  border-left: 1px solid #0078d7;
  background: #f0f0f0;
  box-shadow: 0 0 8px #0006;
}
.titlebar {
  display: flex;
  align-items: center;
  flex: none;
  height: 47px;
  padding-left: 11px;
  background: #0078d7;
  color: #fff;
}
h1 {
  flex: 1;
  margin: 0 0 2px 5px;
  font: 19px/26px "Open Sans", sans-serif;
}
.win-btn {
  width: 69px;
  height: 47px;
}
.win-btn svg {
  width: 16px;
  height: 16px;
  fill: none;
  stroke: #fff;
}
.win-btn.last {
  width: 44px;
  text-align: right;
  overflow: hidden;
}
.menu {
  display: flex;
  align-items: center;
  flex: none;
  gap: 20px;
  height: 29px;
  padding-left: 8px;
  background: #fff;
  color: #111;
  font: 19px/24px "Noto Sans", sans-serif;
}
.menu u {
  text-underline-offset: 3px;
}

/* toolbars */
.toolbars {
  flex: none;
  padding-top: 1px;
  border-top: 1px solid #808080;
  border-bottom: 2px solid #aaa;
}
.tb-row {
  display: flex;
  gap: 2px;
  height: 48px;
}
.tb {
  display: flex;
  align-items: center;
  flex: none;
  height: 48px;
  padding-right: 7px;
  border: 1px solid #fff;
  border-right: 2px solid #808080;
  border-bottom: 2px solid #808080;
}
.tb.up {
  padding-bottom: 3px;
}
.tb.grow {
  flex: 1;
}
.handle {
  align-self: flex-start;
  width: 6px;
  height: 42px;
  margin: 2px 10px 0 0;
  border-right: 2px solid #888;
  border-bottom: 1px solid #888;
}
.tb.filter { margin-left: 734px; }
.tb.mode { margin-left: 57px; }
.tb.cover { margin-left: 178px; }
.tb.col-layout, .tb.search-bar { padding-right: 12px; }
.tb.zoom { margin-left: 8px; }
.tb.show { margin-left: 31px; }
.tool {
  display: flex;
  justify-content: center;
  width: 33px;
  height: 29px;
  align-items: center;
}
.tool.tight {
  width: 28px;
}
.tool.raised, .tool.sunken {
  width: 30px;
  height: 30px;
  margin: 0 4px 0 5px;
}
.tool.raised {
  border: 1px solid #fff;
  border-right: 2px solid #888;
  border-bottom: 2px solid #888;
}
.tool.sunken {
  background: #fff;
  border: 1px solid #fff;
  border-top: 2px solid #222;
  border-left: 2px solid #222;
}
.tb-sep {
  width: 16px;
  height: 24px;
  background: repeating-linear-gradient(#555 0 1px, transparent 1px 3px) 7px 0 / 2px 100% no-repeat;
}
.caret {
  width: 14px;
  flex: none;
}
.caret::before {
  content: "";
  display: block;
  width: 0;
  margin: 4px auto 0;
  border: 4px solid transparent;
  border-top: 5px solid #000;
  border-bottom: 0;
}
.combo {
  display: flex;
  align-items: center;
  flex: 1;
  padding: 4px 0 0 7px;
}
select, input {
  width: 183px;
  height: 28px;
  padding: 0 2px;
  border: 0;
  border-top: 2px solid #777;
  border-left: 2px solid #777;
  border-right: 2px solid #fff;
  border-bottom: 2px solid #fff;
  border-radius: 0;
  outline: 0;
  appearance: none;
  background: #f0f0f0;
  color: #222;
  opacity: 1;
  font: 17px/22px "Liberation Mono", monospace;
}
.combo label {
  margin: -6px 8px 0 0;
}
.layout select { flex: 1; }
.layout { padding-right: 6px; }
.column select { width: 321px; color: #808080; }
.column label, .search label { color: #808080; }
.search select { width: 174px; }
.search { margin-right: 4px; padding-left: 10px; }
.combo-arrow {
  display: flex;
  align-items: center;
  justify-content: center;
  width: 26px;
  height: 26px;
  margin-left: 3px;
  border-right: 2px solid #888;
  border-bottom: 2px solid #888;
}
.combo-arrow svg {
  width: 20px;
  height: 14px;
}
.spin {
  display: flex;
  gap: 2px;
  margin: 0 6px;
}
.spin input {
  width: 89px;
  background: #fff;
  text-align: right;
}
.spin-btns {
  display: flex;
  flex-direction: column;
  width: 21px;
}
.spin-btns button {
  flex: 1;
  display: flex;
  align-items: center;
  justify-content: center;
  border-right: 2px solid #888;
  border-bottom: 1px solid #888;
}
i.up, i.down, i.left, i.right {
  border: 5px solid transparent;
}
i.up { border-top: 0; border-bottom: 8px solid #000; }
i.down { border-bottom: 0; border-top: 8px solid #000; }
i.left { border-left: 0; border-right: 5px solid #000; }
i.right { border-right: 0; border-left: 5px solid #000; }

/* docked panes */
.docks {
  display: flex;
  flex: 1;
  min-height: 0;
  gap: 10px;
  padding-bottom: 10px;
  background: #ccc;
}
.col {
  display: flex;
  flex-direction: column;
  min-height: 0;
}
.sim-col { width: 231px; flex: none; }
.wave-col { flex: 1; min-width: 0; }
.pane {
  display: flex;
  flex-direction: column;
  flex: 1;
  min-height: 0;
  padding: 3px 2px 0 3px;
  border-right: 1px solid #aaa;
  border-bottom: 2px solid #aaa;
  background: #f0f0f0;
}
.pane.objects {
  flex: none;
  width: 199px;
}
.pane-title {
  display: flex;
  align-items: center;
  flex: none;
  gap: 6px;
  height: 27px;
  padding-right: 2px;
  white-space: nowrap;
}
.grip {
  flex: none;
  width: 26px;
  height: 13px;
  margin: 0 auto;
  background: radial-gradient(#444 1px, transparent 1px) 0 0 / 5px 5px;
}
.pane-title.blue {
  padding: 0 1px 0 2px;
  background: #99b4d1;
}
.rail {
  flex: 1;
  height: 12px;
  border-right: 1px solid #777;
  background: linear-gradient(#fff 0 3px, #777 3px 5px, #f0f0f0 5px 7px, #fff 7px 10px, #777 10px 12px);
}
.blue .rail {
  background: linear-gradient(#cdeaf4 0 3px, #111 3px 5px, #99b4d1 5px 6px, #cdeaf4 6px 9px, #111 10px 12px);
}
.mini {
  width: 16px;
  height: 16px;
  border-right: 2px solid #888;
  border-bottom: 2px solid #888;
  background: #f6f6f6;
  line-height: 0;
}
.mini svg {
  width: 14px;
  height: 14px;
}
.list-head {
  display: flex;
  flex: none;
  height: 27px;
  border-top: 2px solid #888;
  border-left: 1px solid #888;
  border-bottom: 2px solid #888;
}
.sort {
  display: flex;
  align-items: center;
  justify-content: center;
  width: 15px;
  border-right: 2px solid #888;
}
.sort i {
  border: 6px solid transparent;
  border-top: 9px solid #555;
  border-bottom: 0;
}
.head-text {
  flex: 1;
  padding-left: 2px;
  line-height: 26px;
}
.head-end {
  width: 5px;
  border-left: 2px solid #888;
}
.tree {
  flex: 1;
  min-height: 0;
  padding-top: 4px;
  border-left: 1px solid #888;
  background: #fff;
}
.tree-row {
  display: flex;
  align-items: center;
  height: 24px;
}
.selected {
  background: #bfcddb;
}
.expander {
  width: 15px;
  height: 15px;
  margin: 2px 0 0 5px;
  border: 1px solid #999;
  border-radius: 2px;
  background: #fff;
  line-height: 13px;
  text-align: center;
}
.branch {
  width: 10px;
  border-top: 1px solid #888;
}
.cube {
  width: 20px;
  height: 20px;
  margin-right: 7px;
}
.tree-name {
  flex: 1;
}
.tree-unit {
  width: 4px;
  overflow: hidden;
  color: #202080;
}
.cap {
  gap: 7px;
  margin-top: 1px;
  padding-left: 27px;
}
.hscroll {
  display: flex;
  flex: none;
  height: 24px;
  margin-top: 5px;
}
.hscroll button, .thumb {
  display: flex;
  align-items: center;
  justify-content: center;
  width: 25px;
  background: #f0f0f0;
  border: 1px solid #fff;
  border-right: 2px solid #888;
  border-bottom: 2px solid #888;
}
.thumb.t1 { width: 42px; }
.thumb.t2 { width: 47px; }
.trough {
  flex: 1;
  background: #f8f8f8;
}
.obj-body {
  flex: 1;
  min-height: 0;
  padding-top: 4px;
  background: #505a8a;
}
ul {
  display: grid;
  grid-auto-rows: 1fr;
  height: 332px;
  margin: 0;
  padding: 0;
  list-style: none;
}
li {
  display: flex;
  align-items: center;
  gap: 7px;
  min-height: 0;
}
li .ico {
  width: 22px;
  height: 22px;
}
.obj-list li {
  padding-left: 28px;
  border-bottom: 1px solid #505a8a;
  background: #bfcddb;
}

.tabs {
  display: flex;
  flex: none;
  height: 35px;
  padding-top: 3px;
}
.tab {
  display: flex;
  align-items: center;
  gap: 3px;
  height: 32px;
  padding: 0 5px 4px 6px;
  border: 2px solid #222;
  border-top: 0;
  border-radius: 0 0 6px 6px;
  background: #f0f0f0;
}
.tab.off {
  border-top: 2px solid #222;
  background: #ccc;
}
.tab b {
  width: 15px;
  margin-left: 5px;
  color: #aaa;
  font-size: 21px;
  text-align: center;
}
.tab.cut {
  width: 84px;
  padding-right: 0;
  border-right: 0;
}
.wave-col .tab {
  gap: 5px;
}
.tab-nav {
  width: 16px;
  height: 24px;
  background: #f0f0f0;
  border: 1px solid #fff;
  border-right: 2px solid #888;
  border-bottom: 2px solid #888;
  line-height: 0;
}
.tab-nav svg {
  width: 8px;
  height: 14px;
}
.tab-rest {
  flex: 1;
  margin-right: 5px;
  border-top: 2px solid #222;
  background: #f0f0f0;
}

/* wave window */
.pane.wave {
  padding: 3px 0 4px 2px;
  border-left: 1px solid #aaa;
  border-right: 0;
}
.wave-grid {
  display: flex;
  flex: 1;
  min-height: 0;
  margin: 2px 0 0 3px;
  border-top: 1px solid #777;
  background: #f0f0f0;
}
.wcol {
  display: flex;
  flex-direction: column;
  flex: none;
  min-height: 0;
}
.names {
  width: 239px;
  margin-right: 4px;
  border-left: 2px solid #777;
  border-right: 1px solid #777;
}
.values {
  width: 151px;
  margin-right: 4px;
  border-right: 1px solid #777;
}
.plot {
  position: relative;
  flex: 1;
  min-width: 0;
  border-right: 2px solid #777;
}
.edge {
  width: 6px;
  margin-left: 4px;
}
.w-head {
  display: flex;
  align-items: center;
  flex: none;
  height: 29px;
  padding-left: 13px;
  background: #808080;
  color: #fff;
}
.w-head .caret {
  margin-left: 4px;
}
.msgs {
  justify-content: flex-end;
  padding-right: 7px;
}
.sash {
  flex: none;
  height: 4px;
  background: #fff;
  border-top: 1px solid #888;
  border-bottom: 1px solid #888;
}
.w-body {
  flex: 1;
  min-height: 0;
  overflow: hidden;
  background: #fff;
}
.names ul {
  margin-left: 12px;
}
.wave-grid ul {
  border-top: 4px solid #808080;
  height: 336px;
}
.wave-grid li {
  border-bottom: 1px solid #808080;
}
.names li {
  padding-left: 30px;
}
.values li {
  padding-left: 2px;
}
.w-now, .w-cursor {
  display: flex;
  align-items: center;
  justify-content: space-between;
  flex: none;
}
.w-now {
  height: 33px;
  padding: 0 14px 0 13px;
  background: #808080;
  color: #fff;
}
.w-now svg {
  width: 52px;
  height: 18px;
}
.w-cursor {
  height: 26px;
  padding-right: 14px;
  background: #fff;
}
.c-icons {
  width: 71px;
  height: 26px;
  padding: 4px 0 0 16px;
  background: #808080;
}
.c-icons svg {
  width: 54px;
  height: 18px;
}
.values .w-now, .values .w-cursor {
  justify-content: flex-end;
}
.names .hscroll {
  border-left: 12px solid #808080;
}
.wave-grid .hscroll {
  height: 28px;
  margin: 0;
  padding-bottom: 2px;
  background: #ccc;
}
.faded .left { border-right-color: #999; }
.faded .right { border-left-color: #999; }
.plot .w-head, .plot .w-now, .plot .w-cursor, .plot .w-body {
  display: block;
  width: 100%;
  padding: 0;
  background: #000;
}
.canvas {
  display: block;
  width: 100%;
  height: 100%;
}
.trace {
  fill: none;
  stroke: #00d800;
  stroke-width: 1;
}
.trace.hot {
  stroke: #ff5a00;
  stroke-width: 2;
}
text {
  text-anchor: middle;
  fill: #00d800;
  font-size: 16px;
}
.w-cursor text {
  fill: #e8b800;
}
.long .before {
  width: 24px;
  background: #c4c4c4;
}
.long .thumb {
  flex: 1;
  justify-content: flex-start;
  align-items: stretch;
}
.long .mark {
  width: 1px;
  margin-left: 52%;
  background: #ffd000;
}
.tooltip {
  position: absolute;
  left: 320px;
  top: 304px;
  padding: 4px 8px 4px 3px;
  border: 1px solid #333;
  background: #ffffe1;
  color: #222;
  font: 17px/22px "Liberation Mono", monospace;
}
.edge .w-head, .edge .w-now, .edge .w-cursor, .edge .end {
  padding: 0;
  background: #808080;
}
.edge .end {
  height: 28px;
}
.edge .w-body {
  border-left: 1px solid #888;
}

/* transcript */
.transcript {
  display: flex;
  flex-direction: column;
  flex: none;
  height: 157px;
  padding: 1px 0 0 5px;
  border-top: 1px solid #aaa;
}
.transcript .pane-title {
  padding-right: 1px;
}
.transcript .ico {
  width: 20px;
  height: 22px;
}
.console {
  flex: 1;
  min-height: 0;
  margin-right: 6px;
  padding: 4px 3px;
  border-top: 2px solid #222;
  border-left: 2px solid #222;
  border-bottom: 1px solid #aaa;
  background: #fff;
  font: 17px/22px "Liberation Mono", monospace;
}
.console p {
  margin: 0;
  min-height: 22px;
}
.console em {
  color: #1a1a9c;
  font: 16px/22px "DejaVu Sans Condensed", "DejaVu Sans", sans-serif;
}
.status {
  display: flex;
  flex: none;
  gap: 8px;
  height: 10px;
  padding-top: 6px;
}
.status span {
  border-top: 2px solid #777;
  border-left: 2px solid #777;
}
.st1 { width: 294px; }
.st2 { flex: 1; }
.st3 { width: 254px; }

/* taskbar */
.taskbar {
  position: relative;
  display: flex;
  align-items: center;
  flex: none;
  height: 46px;
  background: linear-gradient(90deg, #20384c, #24425a 45%, #1e3a52);
  color: #fff;
  font-family: "Noto Sans CJK SC", "Open Sans", sans-serif;
}
.app {
  display: flex;
  align-items: center;
  justify-content: center;
  width: 54px;
  height: 46px;
}
.app.open {
  width: 57px;
  background: linear-gradient(#9ccaf2, #9ccaf2) center bottom / 43px 3px no-repeat;
}
.app.first {
  margin-left: 3px;
}
.app.active {
  background: linear-gradient(#105c9c 43px, #9ccaf2 43px);
}
.spacer {
  flex: 1;
}
.tray {
  width: 36px;
  height: 24px;
}
.ime {
  width: 36px;
  font-size: 21px;
  line-height: 24px;
  text-align: center;
}
.boxed {
  width: 48px;
}
.boxed i {
  display: block;
  width: 24px;
  height: 24px;
  margin: 0 auto;
  background: #fff;
  color: #000;
  font-size: 20px;
  font-style: normal;
}
time {
  width: 78px;
  font: 19px/26px "Open Sans", sans-serif;
  text-align: center;
}
.notify {
  margin: 4px 30px 0 14px;
}
.peek {
  width: 8px;
  height: 46px;
  border-left: 2px solid #7f8f9c;
}
</style>
